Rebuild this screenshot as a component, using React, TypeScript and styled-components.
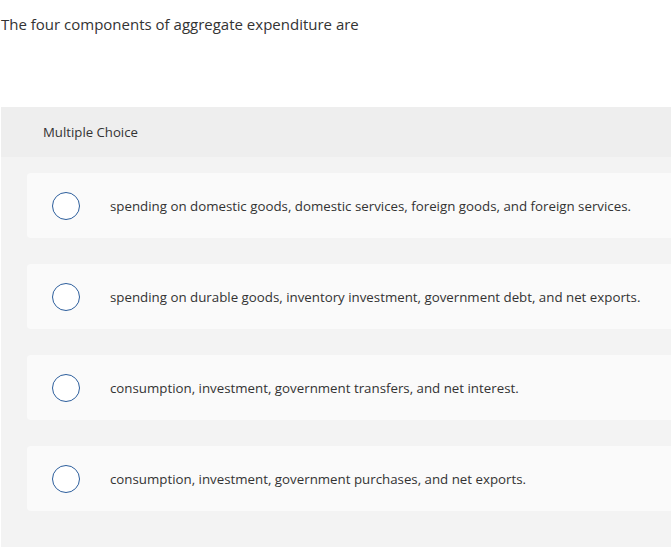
import React from "react";
import styled, { createGlobalStyle } from "styled-components";

const Global = createGlobalStyle`
  html, body {
    margin: 0;
    padding: 0;
    background: #fff;
    font-family: "Open Sans", Lato, "Liberation Sans", sans-serif;
    color: #333;
  }
`;

const Page = styled.div`
  width: 671px;
  height: 547px;
  overflow: hidden;
`;

const Question = styled.p`
  margin: 0;
  padding: 14px 0 0 1px;
  font-size: 15px;
  line-height: 20px;
  height: 107px;
  box-sizing: border-box;
`;

const Panel = styled.div`
  margin-left: 1px;
  background: #f3f3f3;
  padding-bottom: 40px;
`;

const Header = styled.div`
  height: 50px;
  background: #eeeeee;
  display: flex;
  align-items: center;
  padding-left: 42px;
  font-size: 13.2px;
  color: #333;
`;

const Choices = styled.div`
  display: flex;
  flex-direction: column;
  gap: 26px;
  padding: 16px 0 0 26px;
`;

const Choice = styled.label`
  height: 65px;
  background: #fafafa;
  border-radius: 4px 0 0 4px;
  display: flex;
  align-items: center;
  padding-left: 25px;
  font-size: 13.3px;
  color: #333;
  cursor: pointer;
`;

const Radio = styled.span`
  width: 28px;
  height: 28px;
  box-sizing: border-box;
  border: 1.5px solid #2c5e9c;
  border-radius: 50%;
  background: #fff;
  flex-shrink: 0;
  margin-right: 30px;
`;

const options = [
  "spending on domestic goods, domestic services, foreign goods, and foreign services.",
  "spending on durable goods, inventory investment, government debt, and net exports.",
  "consumption, investment, government transfers, and net interest.",
  "consumption, investment, government purchases, and net exports.",
];

export default function App() {
  return (
    <Page>
      <Global />
      <Question>The four components of aggregate expenditure are</Question>
      <Panel>
        <Header>Multiple Choice</Header>
        <Choices>
          {options.map((o, i) => (
            <Choice key={i}>
              <Radio />
              <span>{o}</span>
            </Choice>
          ))}
        </Choices>
      </Panel>
    </Page>
  );
}
